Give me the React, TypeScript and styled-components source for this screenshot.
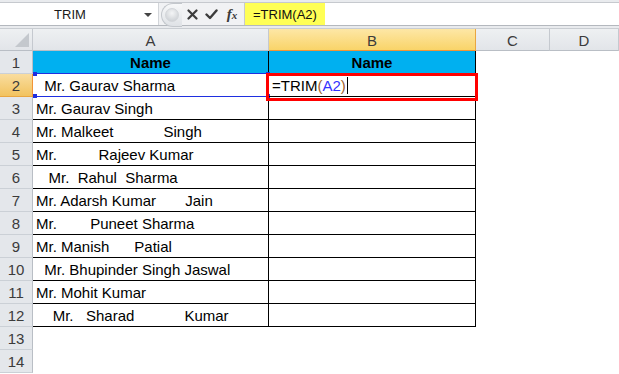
import React from 'react';
import styled, { createGlobalStyle, css } from 'styled-components';

const GlobalStyle = createGlobalStyle`
  body {
    margin: 0;
    background: #ffffff;
    font-family: 'Liberation Sans', Arial, sans-serif;
  }
`;

const Frame = styled.div`
  width: 619px;
  height: 374px;
  overflow: hidden;
  background: #ffffff;
`;

const TopArea = styled.div`
  background: #e9ebee;
  padding: 2px 0 2px;
  border-bottom: 1px solid #c9cdd2;
`;

const FormulaBar = styled.div`
  display: flex;
  align-items: stretch;
  height: 22px;
  background: #f1f2f4;
  border-top: 1px solid #c6c9ce;
  border-bottom: 1px solid #b4b8be;
`;

const NameBox = styled.div`
  width: 158px;
  display: flex;
  align-items: center;
  background: #ffffff;
  border-right: 1px solid #d2d5d9;
`;

const NameText = styled.span`
  flex: 1;
  text-align: center;
  font-size: 13px;
  color: #1a1a1a;
  padding-right: 4px;
`;

const DropArrow = styled.span`
  width: 0;
  height: 0;
  margin: 2px 6px 0 0;
  border-left: 4px solid transparent;
  border-right: 4px solid transparent;
  border-top: 4px solid #444;
`;

const Grip = styled.div`
  width: 20px;
  margin: 0 0 -2px 2px;
  border: 1px solid #c3c7cc;
  border-right: none;
  border-radius: 12px 0 0 12px;
  background: linear-gradient(#f7f8f9, #dfe2e6);
  display: flex;
  align-items: center;
  justify-content: center;

  &::after {
    content: '';
    width: 12px;
    height: 12px;
    border-radius: 50%;
    background: radial-gradient(circle at 50% 35%, #f4f5f6, #c5c9ce);
    border: 1px solid #d3d6da;
  }
`;

const IconSlot = styled.div<{ $w: number }>`
  width: ${(p) => p.$w}px;
  display: flex;
  align-items: center;
  justify-content: center;
`;

const Fx = styled.span`
  font-family: 'Liberation Serif', 'Times New Roman', serif;
  font-style: italic;
  font-weight: bold;
  font-size: 15px;
  color: #3a3a3a;

  small {
    font-size: 11px;
  }
`;

const FormulaInput = styled.div`
  flex: 1;
  display: flex;
  align-items: stretch;
  background: #ffffff;
  border-left: 1px solid #c6c9ce;
`;

const Highlight = styled.span`
  display: flex;
  align-items: center;
  background: #ffff55;
  padding: 0 8px 0 8px;
  font-size: 13px;
  color: #111;
`;

const Sheet = styled.div`
  display: grid;
  grid-template-columns: 33px 236px 207px 74px 1fr;
  grid-auto-rows: 23px;
  grid-template-rows: 22px;
  font-size: 15px;
  color: #000;
`;

const headerText = css`
  display: flex;
  align-items: center;
  justify-content: center;
  font-size: 15px;
  color: #3b3b3b;
  padding-top: 1px;
  box-sizing: border-box;
`;

const ColHeader = styled.div<{ $active?: boolean }>`
  ${headerText}
  background: ${(p) =>
    p.$active ? 'linear-gradient(#fde7a6, #f9d469)' : 'linear-gradient(#eef0f2, #e2e5e9)'};
  border-right: 1px solid ${(p) => (p.$active ? '#e9a640' : '#c5c9cf')};
  border-bottom: 1px solid ${(p) => (p.$active ? '#f29436' : '#b9bec5')};
`;

const Corner = styled.div`
  position: relative;
  background: linear-gradient(#eef0f2, #e2e5e9);
  border-right: 1px solid #c5c9cf;
  border-bottom: 1px solid #b9bec5;

  &::after {
    content: '';
    position: absolute;
    right: 3px;
    bottom: 3px;
    width: 0;
    height: 0;
    border-left: 14px solid transparent;
    border-bottom: 14px solid #c4c8cd;
  }
`;

const RowHeader = styled.div<{ $active?: boolean }>`
  ${headerText}
  background: ${(p) => (p.$active ? 'linear-gradient(#f9dd9f, #f2c35f)' : '#e4e7eb')};
  border-right: 1px solid ${(p) => (p.$active ? '#f29436' : '#b9bec5')};
  border-bottom: 1px solid ${(p) => (p.$active ? '#e9a640' : '#cbd0d6')};
`;

const Cell = styled.div<{ $table?: boolean; $head?: boolean }>`
  position: relative;
  display: flex;
  align-items: center;
  padding: 1px 0 0 3px;
  box-sizing: border-box;
  white-space: pre;
  overflow: visible;
  ${(p) =>
    p.$table &&
    css`
      border-right: 1px solid #000;
      border-bottom: 1px solid #000;
    `}
  ${(p) =>
    p.$head &&
    css`
      background: #00b0f0;
      justify-content: center;
      font-weight: bold;
      padding-left: 0;
    `}
`;

const RangeMark = styled.div`
  position: absolute;
  left: 0;
  top: -1px;
  right: 0;
  bottom: -1px;
  border-top: 1px solid #1f2fe0;
  border-bottom: 1px solid #1f2fe0;

  &::before,
  &::after {
    content: '';
    position: absolute;
    width: 4px;
    height: 4px;
    background: #1f2fe0;
  }
  &::before {
    left: 0;
    top: -2px;
    box-shadow: 0 22px 0 #1f2fe0;
  }
  &::after {
    right: -2px;
    top: -2px;
    box-shadow: 0 22px 0 #1f2fe0;
  }
`;

const EditBox = styled.div`
  position: absolute;
  left: -3px;
  top: -1px;
  right: -3px;
  bottom: -5px;
  border: 3px solid #ff0000;
  z-index: 2;
  pointer-events: none;
`;

const Paren = styled.span`
  color: #a0622d;
`;

const Ref = styled.span`
  color: #3333ff;
`;

const Caret = styled.span`
  display: inline-block;
  width: 1px;
  height: 17px;
  background: #000;
  margin-left: 1px;
`;

const names = [
  '  Mr. Gaurav Sharma',
  'Mr. Gaurav Singh',
  'Mr. Malkeet            Singh',
  'Mr.          Rajeev Kumar',
  '   Mr.  Rahul  Sharma',
  'Mr. Adarsh Kumar       Jain',
  'Mr.        Puneet Sharma',
  'Mr. Manish      Patial',
  '  Mr. Bhupinder Singh Jaswal',
  'Mr. Mohit Kumar',
  '    Mr.   Sharad            Kumar',
];

function CloseIcon(): JSX.Element {
  return (
    <svg width="11" height="11" viewBox="0 0 11 11">
      <path d="M1.5 1.5 L9.5 9.5 M9.5 1.5 L1.5 9.5" stroke="#3c3c3c" strokeWidth="2.2" strokeLinecap="round" />
    </svg>
  );
}

function CheckIcon(): JSX.Element {
  return (
    <svg width="13" height="11" viewBox="0 0 13 11">
      <path d="M1.5 5.5 L5 9 L11.5 1.5" stroke="#3c3c3c" strokeWidth="2.4" fill="none" strokeLinecap="round" strokeLinejoin="round" />
    </svg>
  );
}

function App(): JSX.Element {
  const rows = Array.from({ length: 14 }, (_, i) => i + 1);

  return (
    <Frame>
      <GlobalStyle />
      <TopArea>
        <FormulaBar>
          <NameBox>
            <NameText>TRIM</NameText>
            <DropArrow />
          </NameBox>
          <Grip />
          <IconSlot $w={20}>
            <CloseIcon />
          </IconSlot>
          <IconSlot $w={18}>
            <CheckIcon />
          </IconSlot>
          <IconSlot $w={24}>
            <Fx>
              f<small>x</small>
            </Fx>
          </IconSlot>
          <FormulaInput>
            <Highlight>=TRIM(A2)</Highlight>
          </FormulaInput>
        </FormulaBar>
      </TopArea>

      <Sheet>
        <Corner />
        <ColHeader>A</ColHeader>
        <ColHeader $active>B</ColHeader>
        <ColHeader>C</ColHeader>
        <ColHeader>D</ColHeader>

        {rows.map((r) => {
          const inTable = r <= 12;
          return (
            <React.Fragment key={r}>
              <RowHeader $active={r === 2}>{r}</RowHeader>
              {r === 1 ? (
                <>
                  <Cell $table $head>Name</Cell>
                  <Cell $table $head>Name</Cell>
                </>
              ) : (
                <>
                  <Cell $table={inTable}>
                    {inTable ? names[r - 2] : ''}
                    {r === 2 && <RangeMark />}
                  </Cell>
                  <Cell $table={inTable}>
                    {r === 2 && (
                      <>
                        =TRIM<Paren>(</Paren>
                        <Ref>A2</Ref>
                        <Paren>)</Paren>
                        <Caret />
                        <EditBox />
                      </>
                    )}
                  </Cell>
                </>
              )}
              <Cell />
              <Cell />
            </React.Fragment>
          );
        })}
      </Sheet>
    </Frame>
  );
}

export default App;
